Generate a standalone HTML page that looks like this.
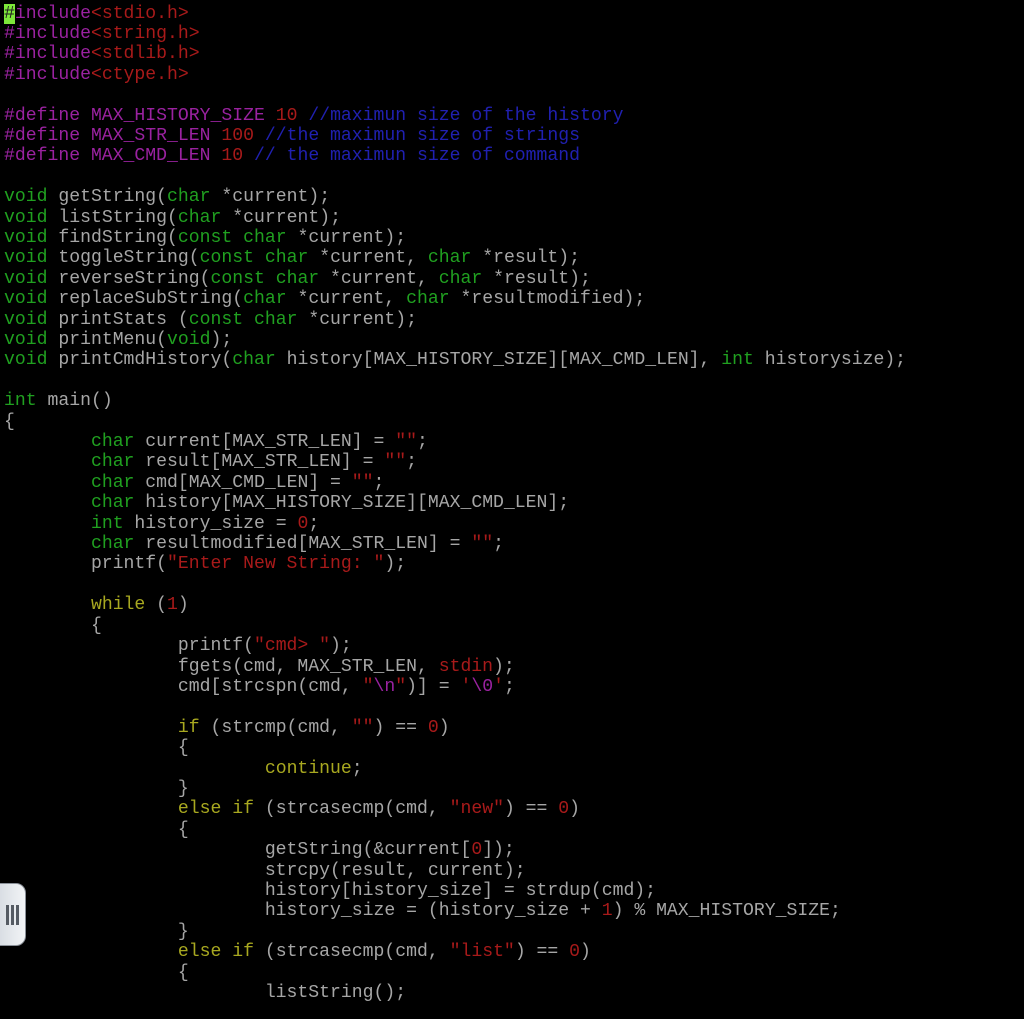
<!DOCTYPE html>
<html><head><meta charset="utf-8"><style>
html,body{margin:0;padding:0;background:#000;width:1024px;height:1019px;overflow:hidden}
pre{margin:0;position:absolute;left:4px;top:3.5px;font-family:"Liberation Mono","Courier New",monospace;font-size:18.13px;line-height:20.4px;color:#a6a6a6}
.p{color:#9a22a0}.r{color:#a81a1a}.b{color:#2020b0}.g{color:#20a020}.y{color:#a8a820}
.cur{background:#7ee83a;color:#222}
.h{position:absolute;left:-2px;top:883px;width:28px;height:63px;background:linear-gradient(90deg,#d8dde3,#f2f4f6);border-radius:0 10px 10px 0;border:1px solid #8a9098;box-sizing:border-box}
.h i{position:absolute;top:21px;width:3px;height:20px;background:#555b63}
</style></head><body>
<pre><span class="cur">#</span><span class="p">include</span><span class="r">&lt;stdio.h&gt;</span>
<span class="p">#include</span><span class="r">&lt;string.h&gt;</span>
<span class="p">#include</span><span class="r">&lt;stdlib.h&gt;</span>
<span class="p">#include</span><span class="r">&lt;ctype.h&gt;</span>

<span class="p">#define MAX_HISTORY_SIZE</span> <span class="r">10</span> <span class="b">//maximun size of the history</span>
<span class="p">#define MAX_STR_LEN</span> <span class="r">100</span> <span class="b">//the maximun size of strings</span>
<span class="p">#define MAX_CMD_LEN</span> <span class="r">10</span> <span class="b">// the maximun size of command</span>

<span class="g">void</span> getString(<span class="g">char</span> *current);
<span class="g">void</span> listString(<span class="g">char</span> *current);
<span class="g">void</span> findString(<span class="g">const char</span> *current);
<span class="g">void</span> toggleString(<span class="g">const char</span> *current, <span class="g">char</span> *result);
<span class="g">void</span> reverseString(<span class="g">const char</span> *current, <span class="g">char</span> *result);
<span class="g">void</span> replaceSubString(<span class="g">char</span> *current, <span class="g">char</span> *resultmodified);
<span class="g">void</span> printStats (<span class="g">const char</span> *current);
<span class="g">void</span> printMenu(<span class="g">void</span>);
<span class="g">void</span> printCmdHistory(<span class="g">char</span> history[MAX_HISTORY_SIZE][MAX_CMD_LEN], <span class="g">int</span> historysize);

<span class="g">int</span> main()
{
        <span class="g">char</span> current[MAX_STR_LEN] = <span class="r">""</span>;
        <span class="g">char</span> result[MAX_STR_LEN] = <span class="r">""</span>;
        <span class="g">char</span> cmd[MAX_CMD_LEN] = <span class="r">""</span>;
        <span class="g">char</span> history[MAX_HISTORY_SIZE][MAX_CMD_LEN];
        <span class="g">int</span> history_size = <span class="r">0</span>;
        <span class="g">char</span> resultmodified[MAX_STR_LEN] = <span class="r">""</span>;
        printf(<span class="r">"Enter New String: "</span>);

        <span class="y">while</span> (<span class="r">1</span>)
        {
                printf(<span class="r">"cmd&gt; "</span>);
                fgets(cmd, MAX_STR_LEN, <span class="r">stdin</span>);
                cmd[strcspn(cmd, <span class="r">"</span><span class="p">\n</span><span class="r">"</span>)] = <span class="r">'</span><span class="p">\0</span><span class="r">'</span>;

                <span class="y">if</span> (strcmp(cmd, <span class="r">""</span>) == <span class="r">0</span>)
                {
                        <span class="y">continue</span>;
                }
                <span class="y">else if</span> (strcasecmp(cmd, <span class="r">"new"</span>) == <span class="r">0</span>)
                {
                        getString(&amp;current[<span class="r">0</span>]);
                        strcpy(result, current);
                        history[history_size] = strdup(cmd);
                        history_size = (history_size + <span class="r">1</span>) % MAX_HISTORY_SIZE;
                }
                <span class="y">else if</span> (strcasecmp(cmd, <span class="r">"list"</span>) == <span class="r">0</span>)
                {
                        listString();
</pre>
<div class="h"><i style="left:7px"></i><i style="left:12px"></i><i style="left:17px"></i></div>
</body></html>
